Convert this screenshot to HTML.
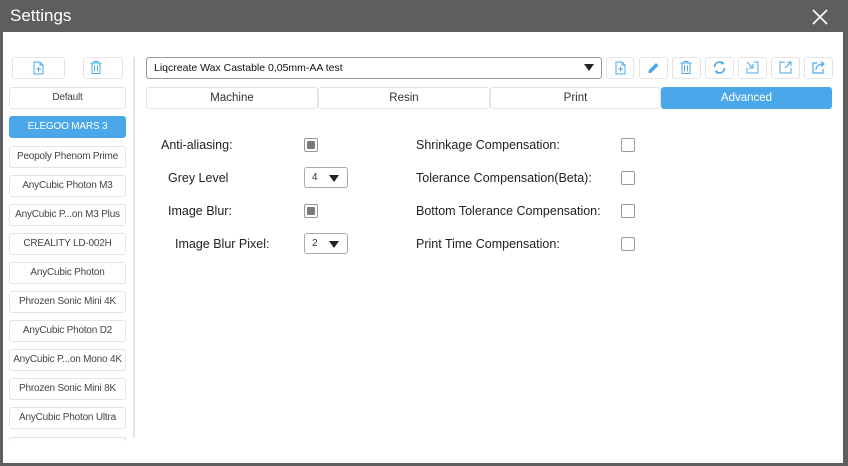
<!DOCTYPE html>
<html><head><meta charset="utf-8"><style>
*{margin:0;padding:0;box-sizing:border-box}
body{width:848px;height:466px;background:#5e5e5e;font-family:"Liberation Sans",sans-serif;position:relative;overflow:hidden;color:#333}
.title{position:absolute;left:10px;top:6px;font-size:17px;color:#fff}
.close{position:absolute;left:811px;top:8px}
.win{position:absolute;left:3px;top:32px;width:840px;height:431px;background:#fff}
.b{position:absolute;border:1px solid #e4e4e4;border-radius:3px;background:#fff;font-size:11px;text-align:center;line-height:20px;height:22px;white-space:nowrap;overflow:hidden}
.l{font-size:10px;letter-spacing:-0.2px;color:#444}
.sel{background:#4aa8ea;color:#fff;border-color:#4aa8ea}
.lbl{position:absolute;font-size:12.5px;color:#222}
.cb{position:absolute;width:14px;height:14px;border:1px solid #999;border-radius:2px;background:#fff}
.cb.on::after{content:"";position:absolute;left:2px;top:2px;width:8px;height:8px;background:#7a7a7a;border-radius:1px}
.dd{position:absolute;width:44px;height:21px;border:1px solid #aaa;border-radius:3px;font-size:10px;line-height:19px;padding-left:7px}
.dd::after{content:"";position:absolute;right:8px;top:7px;border-left:5px solid transparent;border-right:5px solid transparent;border-top:7px solid #222}
svg{position:absolute}
</style></head><body>
<div class="title">Settings</div>
<svg class="close" width="18" height="18" viewBox="0 0 18 18"><path d="M2 2L16 16M16 2L2 16" stroke="#fff" stroke-width="1.6"/></svg>
<div class="win"></div>
<div class="b" style="left:12px;top:57px;width:53px"></div>
<svg style="left:31px;top:61px" width="14" height="14" viewBox="0 0 14 14"><path d="M3 1h6l3 3v9H3z M9 1v3h3 M7.5 5.5v5 M5 8h5" fill="none" stroke="#4aa8ea" stroke-width="1"/></svg>
<div class="b" style="left:83px;top:57px;width:40px"></div>
<svg style="left:89px;top:60px" width="14" height="15" viewBox="0 0 14 15"><path d="M1.5 3h11 M5 3V1.5h4V3 M3 3v10.5h8V3 M5.5 5.5v6 M8.5 5.5v6" fill="none" stroke="#4aa8ea" stroke-width="1"/></svg>
<div class="b l" style="left:9px;top:87px;width:117px">Default</div>
<div class="b l sel" style="left:9px;top:116px;width:117px">ELEGOO MARS 3</div>
<div class="b l" style="left:9px;top:146px;width:117px">Peopoly Phenom Prime</div>
<div class="b l" style="left:9px;top:175px;width:117px">AnyCubic Photon M3</div>
<div class="b l" style="left:9px;top:204px;width:117px">AnyCubic P...on M3 Plus</div>
<div class="b l" style="left:9px;top:233px;width:117px">CREALITY LD-002H</div>
<div class="b l" style="left:9px;top:262px;width:117px">AnyCubic Photon</div>
<div class="b l" style="left:9px;top:291px;width:117px">Phrozen Sonic Mini 4K</div>
<div class="b l" style="left:9px;top:320px;width:117px">AnyCubic Photon D2</div>
<div class="b l" style="left:9px;top:349px;width:117px">AnyCubic P...on Mono 4K</div>
<div class="b l" style="left:9px;top:378px;width:117px">Phrozen Sonic Mini 8K</div>
<div class="b l" style="left:9px;top:407px;width:117px">AnyCubic Photon Ultra</div>
<div class="b" style="left:9px;top:437px;width:117px;height:4px;border-bottom:none"></div>
<div style="position:absolute;left:133px;top:57px;width:2px;height:381px;background:#e6e6e6"></div>
<div class="b" style="left:146px;top:57px;width:456px;border-color:#999;text-align:left;padding-left:7px;font-size:10.5px;color:#111">Liqcreate Wax Castable 0,05mm-AA test</div>
<svg style="left:584px;top:64px" width="10" height="8"><path d="M0 0h10L5 7z" fill="#222"/></svg>
<div class="b" style="left:606px;top:57px;width:28px"></div>
<div class="b" style="left:639px;top:57px;width:29px"></div>
<div class="b" style="left:672px;top:57px;width:29px"></div>
<div class="b" style="left:705px;top:57px;width:29px"></div>
<div class="b" style="left:738px;top:57px;width:29px"></div>
<div class="b" style="left:771px;top:57px;width:29px"></div>
<div class="b" style="left:804px;top:57px;width:29px"></div>
<svg style="left:613px;top:61px" width="14" height="14" viewBox="0 0 14 14"><path d="M3 1h6l3 3v9H3z M9 1v3h3 M7.5 5.5v5 M5 8h5" fill="none" stroke="#4aa8ea"/></svg>
<svg style="left:646px;top:60px" width="15" height="15" viewBox="0 0 15 15"><path d="M2.5 10.5L10 3l2.5 2.5L5 13H2.5z" fill="#4aa8ea"/></svg>
<svg style="left:679px;top:60px" width="14" height="15" viewBox="0 0 14 15"><path d="M1.5 3h11 M5 3V1.5h4V3 M3 3v10.5h8V3 M5.5 5.5v6 M8.5 5.5v6" fill="none" stroke="#4aa8ea"/></svg>
<svg style="left:712px;top:60px" width="15" height="15" viewBox="0 0 15 15"><path d="M2.5 7A5 5 0 0 1 11 3.5 M12.5 8A5 5 0 0 1 4 11.5" fill="none" stroke="#4aa8ea" stroke-width="1.6"/><path d="M10 1l2.5 3-3.5.5z M5 14L2.5 11l3.5-.5z" fill="#4aa8ea"/></svg>
<svg style="left:745px;top:60px" width="15" height="15" viewBox="0 0 15 15"><path d="M9 2h4v11H2V8 M2 2l6 6 M8 4v4H4" fill="none" stroke="#4aa8ea"/></svg>
<svg style="left:778px;top:60px" width="15" height="15" viewBox="0 0 15 15"><path d="M7 2H2v11h11V8 M7 8l6-6 M9 2h4v4" fill="none" stroke="#4aa8ea"/></svg>
<svg style="left:811px;top:60px" width="15" height="15" viewBox="0 0 15 15"><path d="M6 3H2v10h10V9 M5 10c0-4 3-6 8-6 M10 1.5l3 2.5-3 2.5" fill="none" stroke="#4aa8ea" stroke-width="1.2"/></svg>
<div class="b" style="left:146px;top:87px;width:172px;font-size:11.5px">Machine</div>
<div class="b" style="left:318px;top:87px;width:172px;font-size:11.5px">Resin</div>
<div class="b" style="left:490px;top:87px;width:171px;font-size:11.5px">Print</div>
<div class="b sel" style="left:661px;top:87px;width:171px;font-size:11.5px">Advanced</div>
<div class="lbl" style="left:161px;top:138px">Anti-aliasing:</div>
<div class="cb on" style="left:304px;top:138px"></div>
<div class="lbl" style="left:168px;top:171px">Grey Level</div>
<div class="dd" style="left:304px;top:167px">4</div>
<div class="lbl" style="left:168px;top:204px">Image Blur:</div>
<div class="cb on" style="left:304px;top:204px"></div>
<div class="lbl" style="left:175px;top:237px">Image Blur Pixel:</div>
<div class="dd" style="left:304px;top:233px">2</div>
<div class="lbl" style="left:416px;top:138px">Shrinkage Compensation:</div>
<div class="lbl" style="left:416px;top:171px">Tolerance Compensation(Beta):</div>
<div class="lbl" style="left:416px;top:204px">Bottom Tolerance Compensation:</div>
<div class="lbl" style="left:416px;top:237px">Print Time Compensation:</div>
<div class="cb" style="left:621px;top:138px"></div>
<div class="cb" style="left:621px;top:171px"></div>
<div class="cb" style="left:621px;top:204px"></div>
<div class="cb" style="left:621px;top:237px"></div>
</body></html>
